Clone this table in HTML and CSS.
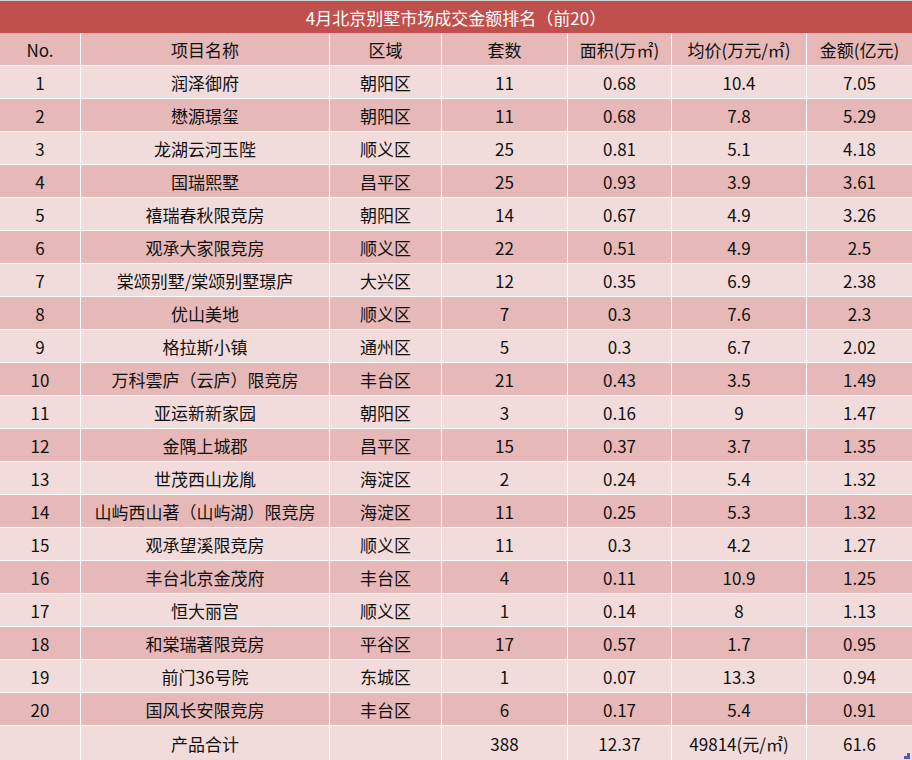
FILE: index.html
```html
<!DOCTYPE html>
<html lang="zh">
<head>
<meta charset="utf-8">
<link rel="stylesheet" href="styles.css">
</head>
<body>
<div class="sheet">
  <div class="title">4月北京别墅市场成交金额排名（前20）</div>
  <div class="grid">
    <div class="row head"><div>No.</div><div>项目名称</div><div>区域</div><div>套数</div><div>面积(万㎡)</div><div>均价(万元/㎡)</div><div>金额(亿元)</div></div>
    <div class="row light"><div>1</div><div>润泽御府</div><div>朝阳区</div><div>11</div><div>0.68</div><div>10.4</div><div>7.05</div></div>
    <div class="row dark"><div>2</div><div>懋源璟玺</div><div>朝阳区</div><div>11</div><div>0.68</div><div>7.8</div><div>5.29</div></div>
    <div class="row light"><div>3</div><div>龙湖云河玉陛</div><div>顺义区</div><div>25</div><div>0.81</div><div>5.1</div><div>4.18</div></div>
    <div class="row dark"><div>4</div><div>国瑞熙墅</div><div>昌平区</div><div>25</div><div>0.93</div><div>3.9</div><div>3.61</div></div>
    <div class="row light"><div>5</div><div>禧瑞春秋限竞房</div><div>朝阳区</div><div>14</div><div>0.67</div><div>4.9</div><div>3.26</div></div>
    <div class="row dark"><div>6</div><div>观承大家限竞房</div><div>顺义区</div><div>22</div><div>0.51</div><div>4.9</div><div>2.5</div></div>
    <div class="row light"><div>7</div><div>棠颂别墅/棠颂别墅璟庐</div><div>大兴区</div><div>12</div><div>0.35</div><div>6.9</div><div>2.38</div></div>
    <div class="row dark"><div>8</div><div>优山美地</div><div>顺义区</div><div>7</div><div>0.3</div><div>7.6</div><div>2.3</div></div>
    <div class="row light"><div>9</div><div>格拉斯小镇</div><div>通州区</div><div>5</div><div>0.3</div><div>6.7</div><div>2.02</div></div>
    <div class="row dark"><div>10</div><div>万科雲庐（云庐）限竞房</div><div>丰台区</div><div>21</div><div>0.43</div><div>3.5</div><div>1.49</div></div>
    <div class="row light"><div>11</div><div>亚运新新家园</div><div>朝阳区</div><div>3</div><div>0.16</div><div>9</div><div>1.47</div></div>
    <div class="row dark"><div>12</div><div>金隅上城郡</div><div>昌平区</div><div>15</div><div>0.37</div><div>3.7</div><div>1.35</div></div>
    <div class="row light"><div>13</div><div>世茂西山龙胤</div><div>海淀区</div><div>2</div><div>0.24</div><div>5.4</div><div>1.32</div></div>
    <div class="row dark"><div>14</div><div>山屿西山著（山屿湖）限竞房</div><div>海淀区</div><div>11</div><div>0.25</div><div>5.3</div><div>1.32</div></div>
    <div class="row light"><div>15</div><div>观承望溪限竞房</div><div>顺义区</div><div>11</div><div>0.3</div><div>4.2</div><div>1.27</div></div>
    <div class="row dark"><div>16</div><div>丰台北京金茂府</div><div>丰台区</div><div>4</div><div>0.11</div><div>10.9</div><div>1.25</div></div>
    <div class="row light"><div>17</div><div>恒大丽宫</div><div>顺义区</div><div>1</div><div>0.14</div><div>8</div><div>1.13</div></div>
    <div class="row dark"><div>18</div><div>和棠瑞著限竞房</div><div>平谷区</div><div>17</div><div>0.57</div><div>1.7</div><div>0.95</div></div>
    <div class="row light"><div>19</div><div>前门36号院</div><div>东城区</div><div>1</div><div>0.07</div><div>13.3</div><div>0.94</div></div>
    <div class="row dark"><div>20</div><div>国风长安限竞房</div><div>丰台区</div><div>6</div><div>0.17</div><div>5.4</div><div>0.91</div></div>
    <div class="row light total"><div></div><div>产品合计</div><div></div><div>388</div><div>12.37</div><div>49814(元/㎡)</div><div>61.6</div></div>
  </div>
  <div class="handle"></div>
</div>
</body>
</html>
```

FILE: styles.css
```css
html, body {
  margin: 0;
  padding: 0;
  background: #ffffff;
}

body {
  font-family: "Noto Sans CJK SC", "Microsoft YaHei", sans-serif;
  font-size: 17px;
  color: #111111;
}

.sheet {
  position: relative;
  width: 912px;
  height: 760px;
  overflow: hidden;
}

.title {
  height: 32px;
  border-top: 1px solid #d4d4d4;
  background: #c0504d;
  color: #ffffff;
  display: flex;
  align-items: center;
  justify-content: center;
  font-size: 17px;
}

.grid {
  display: grid;
  grid-template-columns: 80px 248px 111px 125px 103px 134px 105px;
  grid-auto-rows: 32px;
  gap: 1px;
  background: #ffffff;
}

.row {
  display: contents;
}

.row > div {
  display: flex;
  align-items: center;
  justify-content: center;
  white-space: nowrap;
  line-height: 1;
  padding-top: 1px;
}

.head > div,
.dark > div {
  background: #e6b8b7;
}

.light > div {
  background: #f2dcdb;
}

.total > div {
  height: 33px;
}

.handle {
  position: absolute;
  right: 2px;
  bottom: 1px;
  width: 6px;
  height: 6px;
  background: #4a5bbd;
  clip-path: polygon(50% 0, 100% 0, 100% 100%, 0 100%, 0 50%, 50% 50%);
}
```
